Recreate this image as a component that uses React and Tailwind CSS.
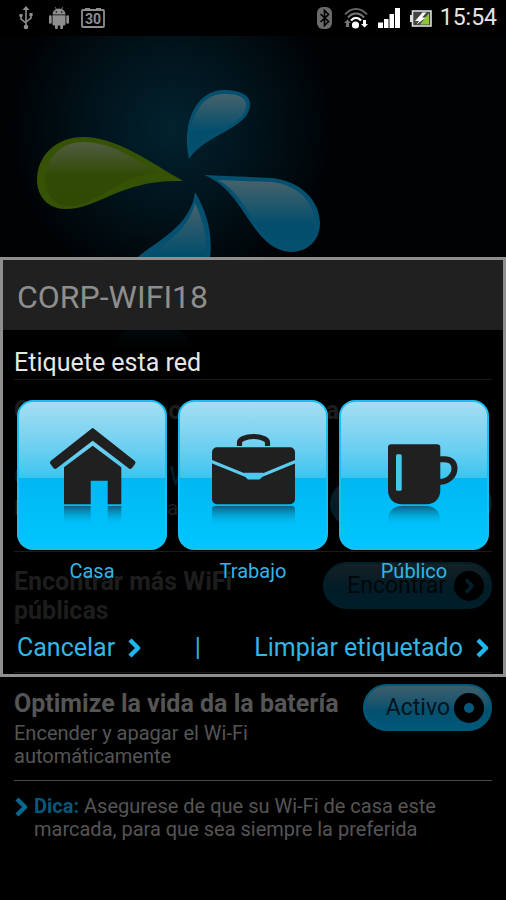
import React from 'react';

const UsbIcon = () => (
    <svg viewBox="0 0 14 24" className="w-[14px] h-6" fill="none" stroke="#8e8e8e" strokeWidth="1.6">
        <path d="M7 3v18M2 10v3l5 4M12 9v3l-5 4" />
        <path d="M7 0l3.500 4h-7z" fill="#8e8e8e" stroke="none" />
        <circle cx="7" cy="21" r="2.300" fill="#8e8e8e" stroke="none" />
        <circle cx="2" cy="9.500" r="1.800" fill="#8e8e8e" stroke="none" />
        <path d="M10.400 7h3.200v3.200h-3.200z" fill="#8e8e8e" stroke="none" />
    </svg>
);

const AndroidIcon = () => (
    <svg viewBox="0 0 20 22" className="w-5 h-[22px]" fill="#8e8e8e">
        <path d="M3.500 7.500C3.500 4.800 5 3 7 2.200L5.800.4l.6-.4 1.300 1.900a8 8 0 0 1 4.600 0L13.600 0l.6.4L13 2.200c2 .8 3.500 2.600 3.500 5.300z" />
        <path d="M3.500 8.300h13v8.700a1.500 1.500 0 0 1-1.500 1.500h-1v2.300a1.200 1.200 0 0 1-2.800 0v-2.300H8.800v2.300a1.200 1.200 0 0 1-2.800 0v-2.300H5A1.500 1.500 0 0 1 3.500 17z" />
        <rect x="0" y="8.300" width="2.700" height="8.500" rx="1.300" />
        <rect x="17.300" y="8.300" width="2.700" height="8.500" rx="1.300" />
        <circle cx="7.300" cy="5" r=".8" fill="#000" />
        <circle cx="12.700" cy="5" r=".8" fill="#000" />
    </svg>
);

const CalendarIcon = () => (
    <span className="relative flex h-5 w-6 items-center justify-center">
        <svg viewBox="0 0 24 20" className="absolute inset-0 w-6 h-5" fill="none" stroke="#8e8e8e" strokeWidth="1.800">
            <rect x="1" y="2" width="22" height="17" rx="1" />
            <path d="M4 1.200h5M15 1.200h5" strokeWidth="2.400" />
        </svg>
        <span className="pt-px text-[14px] leading-none font-bold text-[#8e8e8e]">30</span>
    </span>
);

const BluetoothIcon = () => (
    <svg viewBox="0 0 15 22" className="w-[15px] h-[22px]">
        <rect width="15" height="22" rx="6" fill="#6b6b6b" />
        <path d="M3.500 7l8 7.500-4 4V3.500l4 4-8 7.500" fill="none" stroke="#000" strokeWidth="1.700" />
    </svg>
);

const WifiIcon = () => (
    <svg viewBox="0 0 24 22" className="w-6 h-[22px]" fill="none">
        <path d="M1 7.500C7 0 17 0 23 7.500" stroke="#666" strokeWidth="2" />
        <path d="M4 10.500c4.500-5.500 11.500-5.500 16 0" stroke="#777" strokeWidth="2" />
        <path d="M7 13.500c3-3.500 7-3.500 10 0" stroke="#fff" strokeWidth="2.200" />
        <circle cx="11.500" cy="18" r="3.600" fill="#fff" />
        <path d="M3.500 12.500L7 16H5v4H2v-4H0z" fill="#777" />
        <path d="M20.500 20.500L24 17h-2v-4h-3v4h-2z" fill="#fff" />
    </svg>
);

const SignalIcon = () => (
    <svg viewBox="0 0 22 20" className="w-[22px] h-5" fill="#fff">
        <path d="M0 14.500h5V20H0zM6 11h4.500v9H6zM11.500 6h4.500v14h-4.500zM17 0h5v20h-5z" />
    </svg>
);

const BatteryIcon = () => (
    <svg viewBox="0 0 22 17" className="w-[22px] h-[17px]">
        <path d="M0 5h2v7H0z" fill="#ddd" />
        <rect x="2.500" y="1" width="18.500" height="15" fill="#444" stroke="#ddd" strokeWidth="1.600" />
        <path d="M19 3v11.500h-9z" fill="#8cc63f" />
        <path d="M12.500 2.500L5 11h4l-2.500 3.500 9.500-7h-4l4.500-5z" fill="#fff" />
    </svg>
);

const Chevron = ({ className }) => (
    <svg viewBox="-1 0 14 20" className={className} fill="none" stroke="currentColor" strokeWidth="4.500">
        <path d="M2 2l8 8-8 8" strokeLinejoin="round" />
    </svg>
);

// Flower logo with the blue glow behind it
const Hero = () => (
    <svg viewBox="0 0 506 343" className="block w-full h-auto">
        <defs>
            <radialGradient id="glow" gradientUnits="userSpaceOnUse" cx="172" cy="92" r="165">
                <stop offset="0" stopColor="#02222f" />
                <stop offset=".5" stopColor="#01131b" />
                <stop offset="1" stopColor="#000204" />
            </radialGradient>
            <linearGradient id="green" x1="0" y1="0" x2="0" y2="1">
                <stop offset="0" stopColor="#525c42" />
                <stop offset=".5" stopColor="#324c07" />
                <stop offset="1" stopColor="#304a04" />
            </linearGradient>
            <linearGradient id="blue" x1="0" y1="0" x2="0" y2="1">
                <stop offset="0" stopColor="#46626c" />
                <stop offset=".65" stopColor="#034e6c" />
                <stop offset="1" stopColor="#03506e" />
            </linearGradient>
            <linearGradient id="shade" x1="0" y1="0" x2="0" y2="1">
                <stop offset="0" stopColor="#04202e" />
                <stop offset=".45" stopColor="#000" />
            </linearGradient>
        </defs>
        <rect width="506" height="343" fill="url(#glow)" />
        <path fill="#355205" d="M183 145C150 126 117 101 83 101c-27 0-46 19-46 43 0 17 12 29 28 29 35 0 55-30 118-28z" />
        <path fill="url(#green)" d="M158 136c-24-12-45-30-75-30-25 0-38 20-38 38 0 14 10 26 22 26 32 0 47-28 91-34z" />
        <path fill="#04506e" d="M189 123c-8-38 8-69 35-69 16 0 26 5 26 14 0 25-44 29-61 55z" />
        <path fill="url(#blue)" d="M191 115c-4-31 9-57 33-57 14 0 22 3 22 11 0 21-41 26-55 46z" />
        <path fill="#04506e" d="M204 139l68 3c29 3 48 23 48 45 0 18-13 29-29 29-40-2-45-61-87-77z" />
        <path fill="url(#blue)" d="M218 144l54 2c27 3 43 22 43 41 0 16-11 26-25 26-34-2-40-53-72-69z" />
        <path fill="#04506e" d="M195 156c12 20 18 42 15 66-4 20-22 30-44 30-20 0-34-16-28-31 15-14 53-30 57-65z" />
        <path fill="url(#blue)" d="M195 167c8 17 13 38 11 55-4 18-20 26-40 26-16 0-26-14-20-26 17-13 43-28 49-55z" />
        <ellipse cx="153" cy="318" rx="40" ry="32" fill="url(#shade)" />
    </svg>
);

const HouseIcon = () => (
    <>
        <path d="M75.700 29L34.500 61.500a1.500 1.500 0 0 0-.3 2l3 3.800a1.500 1.500 0 0 0 2 .2L75.700 39.500l36.500 28a1.500 1.500 0 0 0 2-.2l3-3.800a1.500 1.500 0 0 0-.3-2z" stroke="#202020" strokeWidth="2" strokeLinejoin="round" />
        <path d="M47 67.300l28.700-21.600 28.600 21.600v37H90.700V80.700h-17v23.600H47z" />
        <path d="M47 106h26.700v20H47zM90.700 106h13.600v20H90.700z" fill="url(#reflection)" />
    </>
);

const BriefcaseIcon = () => (
    <>
        <path d="M61.500 46v-3.500c0-3 6-6 14-6s14 3 14 6V46" fill="none" stroke="#202020" strokeWidth="5.200" />
        <rect x="34" y="47.300" width="83" height="57" rx="5" />
        <path d="M33.500 61.500L69 76h13.500l35-14.500" fill="none" stroke="#5ccbee" strokeWidth="3" />
        <path d="M66 72.700h19.500l-2 5-2 1.800H70l-2-1.800z" fill="#4dc8ef" />
        <path d="M34 110c0-3 1-4 4-4h75c3 0 4 1 4 4v17H34z" fill="url(#reflection)" />
    </>
);

const CupIcon = () => (
    <>
        <path d="M52 44.300h46a3.300 3.300 0 0 1 3.300 3.300V90c0 9-6 14.300-14 14.300H63C55 104.300 49 99 49 90V47.300a3 3 0 0 1 3-3z" />
        <path d="M100 59.200h5.500c6 0 10 3 10 9.300 0 7-6.500 13.500-15.500 13.500" fill="none" stroke="#202020" strokeWidth="6" />
        <rect x="57" y="54.300" width="5.700" height="36.500" rx="1.500" fill="#45c7ee" />
        <path d="M49 120c0-9 6-14 14-14h24c8 0 14 5 14 14v6H49z" fill="url(#reflection)" />
    </>
);

const places = [
    { label: 'Casa', Icon: HouseIcon },
    { label: 'Trabajo', Icon: BriefcaseIcon },
    { label: 'Público', Icon: CupIcon },
];

const PlaceTile = ({ label, Icon }) => (
    <button type="button" className="flex flex-col items-center gap-2 cursor-pointer">
        <span className="block w-full rounded-2xl border-2 border-[#17bff2] bg-linear-to-b from-[#a3def3] from-0% via-[#38c5ef] via-52% to-[#38c5ef] to-52% overflow-hidden">
            <svg viewBox="2 2 146 146" className="block w-full h-auto" fill="#202020">
                <defs>
                    <linearGradient id="lower" x1="0" y1="0" x2="0" y2="1">
                        <stop offset="0" stopColor="#00b7f3" />
                        <stop offset="1" stopColor="#00c6ff" />
                    </linearGradient>
                    <linearGradient id="reflection" x1="0" y1="0" x2="0" y2="1">
                        <stop offset="0" stopColor="#0b4a5e" stopOpacity=".8" />
                        <stop offset="1" stopColor="#00c0f8" stopOpacity="0" />
                    </linearGradient>
                </defs>
                <rect x="0" y="78" width="150" height="72" fill="url(#lower)" />
                <Icon />
            </svg>
        </span>
        <span className="text-[20px] leading-[26px] text-[#33b5e5]">{label}</span>
    </button>
);

const PillButton = ({ children, icon, className = '' }) => (
    <button
        type="button"
        className={`flex h-[47px] shrink-0 items-center justify-end rounded-full border-2 border-[#04597a] bg-linear-to-b from-[#3b5f6c] via-[#04506e] via-55% to-[#00587a] pr-[6px] text-[23px] text-[#04141b] cursor-pointer ${className}`}
    >
        {children}
        <span className="flex h-[30px] w-[30px] items-center justify-center rounded-full bg-black">{icon}</span>
    </button>
);

const StatusBar = () => (
    <header className="flex h-9 items-center justify-between bg-black pl-[19px] pr-[9px]">
        <div className="flex items-center gap-4">
            <UsbIcon />
            <AndroidIcon />
            <span className="-ml-1"><CalendarIcon /></span>
        </div>
        <div className="flex items-center">
            <BluetoothIcon />
            <span className="ml-3"><WifiIcon /></span>
            <span className="ml-[10px]"><SignalIcon /></span>
            <span className="ml-[10px]"><BatteryIcon /></span>
            <time className="ml-2 text-[23px] leading-9 text-[#e4e4e4]">15:54</time>
        </div>
    </header>
);

const LabelDialog = () => (
    <div
        role="dialog"
        aria-labelledby="network-name"
        className="absolute inset-x-0 top-[257px] border-[3px] border-[#8f8f8f] bg-black/65"
    >
        <h2 id="network-name" className="bg-[#202020] px-[14px] pt-1 text-[32px] leading-[66px] text-[#8e8e8e]">
            CORP-WIFI18
        </h2>
        <div className="px-[11px] pt-[17px]">
            <p className="text-[25px] leading-8 text-[#e6e6e6]">Etiquete esta red</p>
        </div>
        <div className="mt-[21px] grid grid-cols-3 gap-[11px] px-[14px]">
            {places.map((place) => (
                <PlaceTile key={place.label} {...place} />
            ))}
        </div>
        <div className="mt-12 flex items-center justify-between px-[14px] pb-[10px] text-[25px] leading-8 text-[#33b5e5]">
            <button type="button" className="flex items-center gap-3 cursor-pointer">
                Cancelar
                <Chevron className="w-[14px] h-5 text-[#1fb6f0]" />
            </button>
            <span>|</span>
            <button type="button" className="flex items-center gap-3 cursor-pointer">
                Limpiar etiquetado
                <Chevron className="w-[14px] h-5 text-[#1fb6f0]" />
            </button>
        </div>
    </div>
);

const App = () => {
    return (
        <div className="relative min-h-screen bg-black font-[Roboto,sans-serif]">
            <StatusBar />
            <Hero />
            <main className="px-[14px] text-[20px] leading-[23px] text-[#555]">
                <section className="flex h-[173px] justify-between border-y border-[#4a4a4a] pt-4">
                    <div className="min-w-0 flex-1">
                        <h3 className="text-[25px] leading-[29px] font-bold whitespace-nowrap">Conectados por WiFi en casa</h3>
                        <p className="pt-9 text-[25px] leading-8 text-[#04597a]">CORP-WIFI18 W</p>
                        <p className="pt-1">Lista para conectar</p>
                    </div>
                    <PillButton className="mt-[84px] w-[162px]" />
                </section>
                <section className="flex justify-between border-b border-[#4a4a4a] pt-[10px] pb-[47px]">
                    <h3 className="max-w-[250px] pt-[5px] text-[25px] leading-[29px] font-bold">Encontrar más WiFi públicas</h3>
                    <PillButton className="w-[169px] gap-2" icon={<Chevron className="w-3 h-4 text-[#04597a]" />}>
                        Encontrar
                    </PillButton>
                </section>
                <section className="flex justify-between border-b border-[#4a4a4a] pt-[11px] pb-3">
                    <div className="pt-[5px]">
                        <h3 className="text-[25px] leading-[29px] font-bold">Optimize la vida da la batería</h3>
                        <p className="max-w-[300px] pt-1">Encender y apagar el Wi-Fi automáticamente</p>
                    </div>
                    <PillButton
                        className="w-[129px] gap-1"
                        icon={<span className="h-[10px] w-[10px] rounded-full bg-[#04597a]" />}
                    >
                        Activo
                    </PillButton>
                </section>
                <section className="flex gap-[6px] pt-[14px]">
                    <Chevron className="mt-[2px] w-[14px] h-5 shrink-0 text-[#04688f]" />
                    <p className="max-w-[420px]">
                        <b className="text-[#04597a]">Dica:</b> Asegurese de que su Wi-Fi de casa este marcada, para que sea siempre la preferida
                    </p>
                </section>
            </main>
            <LabelDialog />
        </div>
    );
};

export default App;
